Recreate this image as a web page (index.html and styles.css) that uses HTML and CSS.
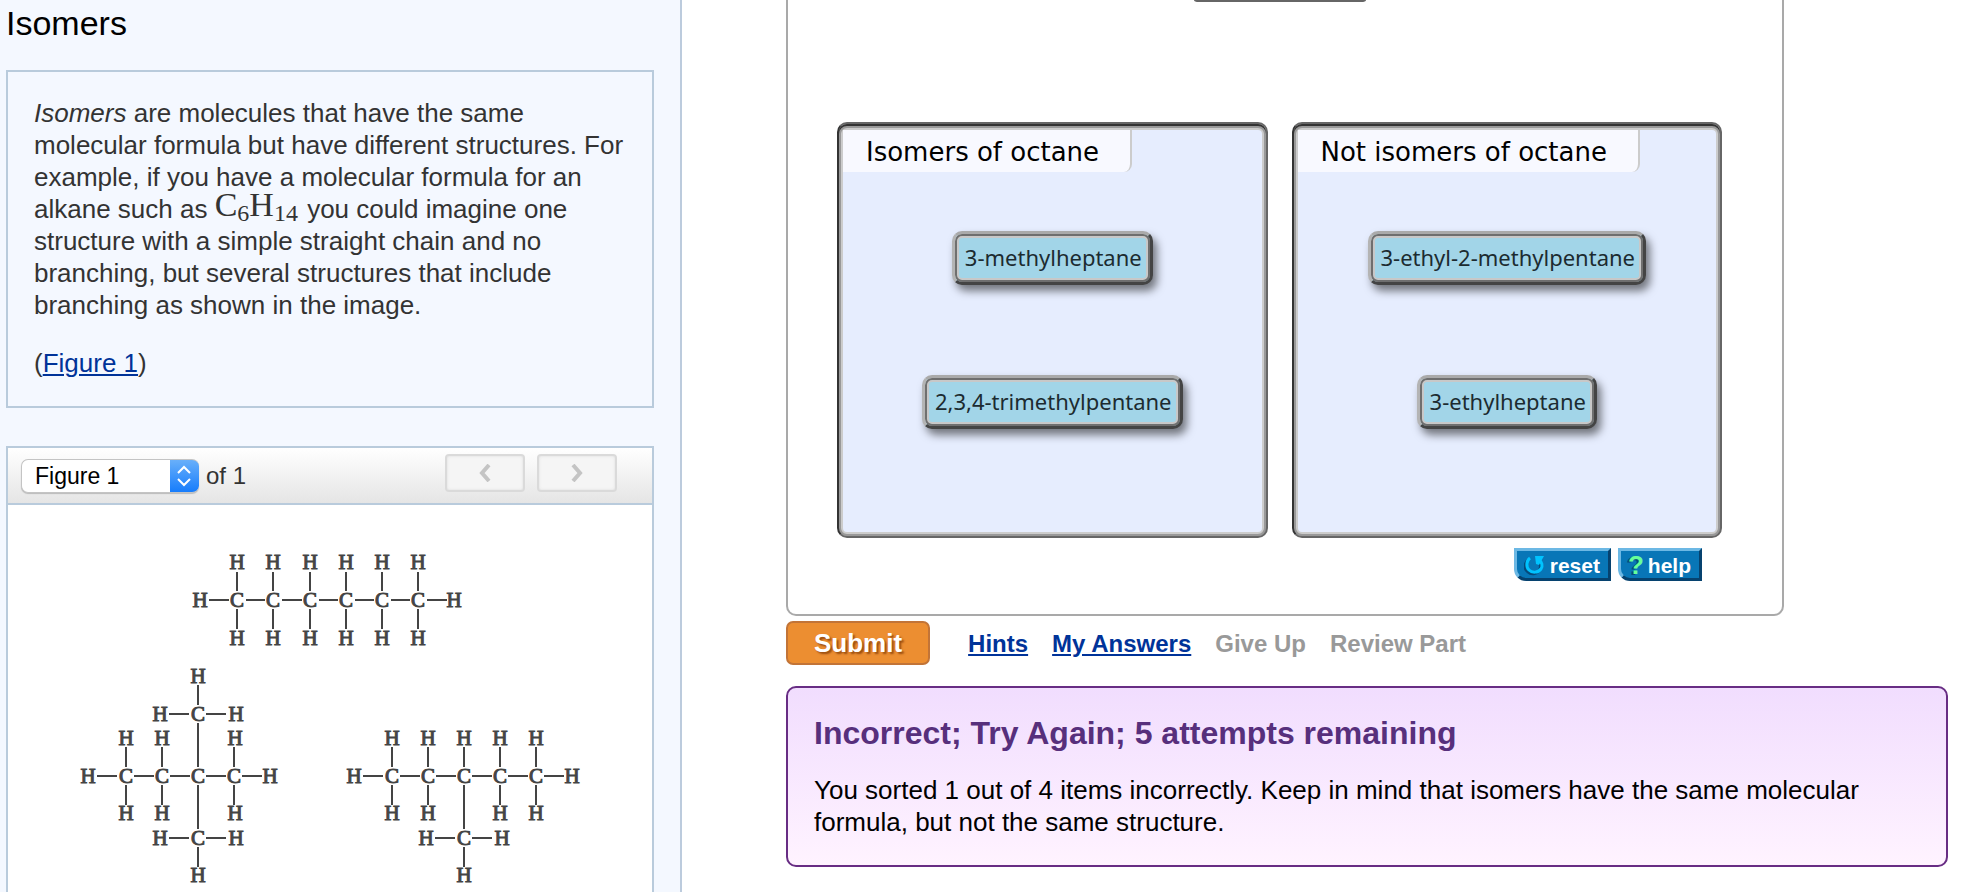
FILE: index.html
```html
<!DOCTYPE html>
<html lang="en">
<head>
    <meta charset="UTF-8">
    <meta name="viewport" content="width=device-width, initial-scale=1.0">
    <title>Isomers</title>
    <link rel="stylesheet" href="styles.css">
</head>
<body>
    <div class="page">
        <aside class="sidebar">
            <h1>Isomers</h1>
            <div class="intro">
                <p><em>Isomers</em> are molecules that have the same molecular formula but have different structures. For example, if you have a molecular formula for an alkane such as <span class="formula">C<sub>6</sub>H<sub>14</sub></span> you could imagine one structure with a simple straight chain and no branching, but several structures that include branching as shown in the image.</p>
                <p>(<a href="#figure">Figure 1</a>)</p>
            </div>
            <section class="figure" id="figure">
                <div class="figure-bar">
                    <div class="picker">
                        <select id="figureSelect" aria-label="Figure">
                            <option>Figure 1</option>
                        </select>
                        <svg class="picker-arrows" width="14" height="22" viewBox="0 0 14 22" fill="none" stroke="#fff" stroke-width="2">
                            <path d="M1 8 L7 2 L13 8 M1 14 L7 20 L13 14"/>
                        </svg>
                    </div>
                    <label for="figureSelect">of 1</label>
                    <div class="figure-nav">
                        <button type="button" aria-label="Previous figure" disabled>
                            <svg width="12" height="18" viewBox="0 0 12 18"><path d="M10 1 L3 9 L10 17"/></svg>
                        </button>
                        <button type="button" aria-label="Next figure" disabled>
                            <svg width="12" height="18" viewBox="0 0 12 18"><path d="M2 1 L9 9 L2 17"/></svg>
                        </button>
                    </div>
                </div>
                <svg class="molecules" viewBox="0 0 644 384" role="img" aria-label="Three isomers of hexane">
                    <!-- hexane -->
                    <g>
                        <text x="229 265 302 338 374 410" y="64">HHHHHH</text>
                        <text x="192 229 265 302 338 374 410 446" y="102">HCCCCCCH</text>
                        <text x="229 265 302 338 374 410" y="140">HHHHHH</text>
                        <path d="M201 95h20M238 95h19M274 95h20M311 95h19M347 95h19M383 95h19M419 95h20"/>
                        <path d="M229 67v19M265 67v19M302 67v19M338 67v19M374 67v19M410 67v19"/>
                        <path d="M229 104v20M265 104v20M302 104v20M338 104v20M374 104v20M410 104v20"/>
                    </g>
                    <!-- 2,2-dimethylbutane -->
                    <g>
                        <text x="190" y="178">H</text>
                        <text x="152 190 228" y="216">HCH</text>
                        <text x="118 154 227" y="240">HHH</text>
                        <text x="80 118 154 190 226 262" y="278">HCCCCH</text>
                        <text x="118 154 227" y="315">HHH</text>
                        <text x="152 190 228" y="340">HCH</text>
                        <text x="190" y="377">H</text>
                        <path d="M89 271h20M126 271h20M162 271h20M198 271h20M234 271h20"/>
                        <path d="M161 209h20M198 209h20M161 333h20M198 333h20"/>
                        <path d="M190 180v20M190 218v44M190 280v44M190 342v20"/>
                        <path d="M118 242v20M154 242v20M226 242v20M118 280v20M154 280v20M226 280v20"/>
                    </g>
                    <!-- 3-methylpentane -->
                    <g>
                        <text x="384 420 456 492 528" y="240">HHHHH</text>
                        <text x="346 384 420 456 492 528 564" y="278">HCCCCCH</text>
                        <text x="384 420 492 528" y="315">HHHH</text>
                        <text x="418 456 494" y="340">HCH</text>
                        <text x="456" y="377">H</text>
                        <path d="M355 271h20M392 271h20M428 271h20M464 271h20M500 271h20M536 271h20"/>
                        <path d="M427 333h20M464 333h20M456 280v44M456 342v20"/>
                        <path d="M384 242v20M420 242v20M456 242v20M492 242v20M528 242v20"/>
                        <path d="M384 280v20M420 280v20M492 280v20M528 280v20"/>
                    </g>
                </svg>
            </section>
        </aside>

        <main class="main">
            <div class="sorter">
                <div class="bank"></div>
                <div class="bins">
                    <section class="bin">
                        <h2>Isomers of octane</h2>
                        <div class="tiles">
                            <div class="tile">3-methylheptane</div>
                            <div class="tile">2,3,4-trimethylpentane</div>
                        </div>
                    </section>
                    <section class="bin">
                        <h2>Not isomers of octane</h2>
                        <div class="tiles">
                            <div class="tile">3-ethyl-2-methylpentane</div>
                            <div class="tile">3-ethylheptane</div>
                        </div>
                    </section>
                </div>
                <div class="tools">
                    <button type="button" class="tool">
                        <svg width="22" height="24" viewBox="0 0 22 24">
                            <path d="M4 6 C0 10 0 15 4 18 C7 21 13 20 15 17 C17 14 17 11 15 8" fill="none" stroke="#064a7c" stroke-width="3"/>
                            <path d="M6 4 C2 7 2 13 5 16 C8 19 14 19 17 15 C19 12 18 8 15 6" fill="none" stroke="#00c3ff" stroke-width="3"/>
                            <path d="M11 2 H20 L15 11 L12 10 Z" fill="#00c3ff"/>
                        </svg>
                        reset
                    </button>
                    <button type="button" class="tool">
                        <span class="question">?</span>
                        help
                    </button>
                </div>
            </div>

            <div class="actions">
                <button type="button" class="submit">Submit</button>
                <a href="#hints">Hints</a>
                <a href="#answers">My Answers</a>
                <span>Give Up</span>
                <span>Review Part</span>
            </div>

            <div class="feedback">
                <h2>Incorrect; Try Again; 5 attempts remaining</h2>
                <p>You sorted 1 out of 4 items incorrectly. Keep in mind that isomers have the same molecular formula, but not the same structure.</p>
            </div>
        </main>
    </div>
</body>
</html>
```
FILE: styles.css
```css
* {
    box-sizing: border-box;
}
body {
    margin: 0;
    font-family: "Liberation Sans", Arial, sans-serif;
    font-size: 26px;
    line-height: 32px;
    color: #000;
    background: #fff;
}
h1, h2, p {
    margin: 0;
}
button, select {
    font-family: inherit;
}
a {
    color: #003399;
}
.page {
    display: grid;
    grid-template-columns: 682px 1fr;
    min-height: 100vh;
}

/* left column */
.sidebar {
    display: flex;
    flex-direction: column;
    padding: 2px 26px 0 6px;
    border-right: 2px solid #bccbdd;
    background: #f4f8ff;
}
.sidebar h1 {
    margin-bottom: 26px;
    font-size: 34px;
    font-weight: normal;
    line-height: 42px;
}
.intro {
    padding: 25px 26px 27px;
    border: 2px solid #b9cbdc;
    color: #333;
}
.intro p + p {
    margin-top: 26px;
}
.formula {
    margin-right: 2px;
    font-family: "Liberation Serif", "Times New Roman", serif;
    font-size: 34px;
    line-height: 0;
    vertical-align: 2px;
}
.formula sub {
    font-size: 24px;
    line-height: 0;
    vertical-align: -5px;
}
.figure {
    flex: 1;
    margin-top: 38px;
    border: 2px solid #b9cbdc;
    border-bottom: 0;
    background: #fff;
}
.figure-bar {
    display: flex;
    align-items: center;
    height: 57px;
    padding: 0 35px 0 13px;
    border-bottom: 2px solid #b9cbdc;
    background: linear-gradient(#fff, #e5e5e5);
    color: #333;
    font-size: 24px;
}
.picker {
    position: relative;
    margin-right: 7px;
}
.picker select {
    display: block;
    width: 178px;
    height: 34px;
    padding: 0 13px;
    border: 1px solid #c4c4c4;
    border-right: 0;
    border-radius: 7px;
    appearance: none;
    background: linear-gradient(#6bb1fa, #147bfc) right / 29px 100% no-repeat #fff;
    background-origin: border-box;
    box-shadow: 0 1px 1px rgba(0, 0, 0, 0.2);
    color: #000;
    font-size: 23px;
}
.picker-arrows {
    position: absolute;
    top: 6px;
    right: 8px;
    pointer-events: none;
}
.figure-nav {
    display: flex;
    gap: 12px;
    margin-left: auto;
    padding-bottom: 6px;
}
.figure-nav button {
    display: flex;
    align-items: center;
    justify-content: center;
    width: 80px;
    height: 38px;
    border: 2px solid #dadada;
    border-radius: 4px;
    background: #f5f5f5;
    box-shadow: inset 0 0 3px #ddd;
}
.figure-nav svg {
    fill: none;
    stroke: #c4c4c4;
    stroke-width: 4;
}
.molecules {
    display: block;
    width: 100%;
    fill: #444;
    stroke: #444;
    font-family: "Liberation Serif", "Times New Roman", serif;
    font-size: 21px;
    text-anchor: middle;
}
.molecules text {
    stroke-width: 1px;
}
.molecules path {
    fill: none;
    stroke-width: 2px;
}

/* right column */
.main {
    padding: 0 28px 0 104px;
}
.sorter {
    max-width: 998px;
    padding: 0 60px 33px 49px;
    border: 2px solid #a9a9a9;
    border-top: 0;
    border-radius: 0 0 10px 10px;
}
.bank {
    width: 172px;
    height: 2px;
    margin: 0 auto 120px;
    border-radius: 0 0 5px 5px / 0 0 2px 2px;
    background: #666;
}
.bins {
    display: grid;
    grid-template-columns: 1fr 1fr;
    gap: 24px;
}
.bin {
    min-height: 416px;
    padding: 6px 4px 4px;
    border: 2px solid #666;
    border-left-color: #333;
    border-radius: 10px;
    background: #e6edfe;
    box-shadow:
        inset 0 2px 0 0 #333,
        inset 0 2px 0 2px #999,
        inset 0 0 0 2px #999,
        inset 0 2px 0 4px #ccc,
        inset 0 0 0 4px #ccc;
}
.bin h2 {
    width: fit-content;
    height: 42px;
    padding: 0 31px 0 23px;
    border-right: 2px solid #ccc;
    border-bottom-right-radius: 8px;
    background: #f8f9ff;
    font-family: "DejaVu Sans", Verdana, sans-serif;
    font-size: 26px;
    font-weight: normal;
    line-height: 44px;
}
.tiles {
    display: flex;
    flex-direction: column;
    align-items: center;
    gap: 90px;
    padding-top: 59px;
}
.tile {
    height: 54px;
    padding: 0 8px 0 10px;
    border: 3px solid;
    border-color: #aaa #444 #444 #b4b4b4;
    border-radius: 10px;
    background: #a2d5e8;
    box-shadow:
        inset 0 0 0 2px #6f6f6f,
        inset 0 0 0 4px #c8c8c8,
        4px 6px 8px rgba(0, 0, 0, 0.5);
    color: #1c2b30;
    font-family: "Noto Sans", Tahoma, sans-serif;
    font-size: 22px;
    line-height: 46px;
}
.tools {
    display: flex;
    justify-content: flex-end;
    gap: 7px;
    margin: 10px 20px 0 0;
}
.tool {
    display: flex;
    align-items: center;
    gap: 4px;
    height: 33px;
    padding: 2px 8px 0 7px;
    border: 3px solid;
    border-color: #6cb8e4 #06426f #06426f #6cb8e4;
    border-radius: 0 0 0 12px;
    background: #0876b7;
    color: #fff;
    font-size: 21px;
    font-weight: bold;
}
.question {
    color: #66ff99;
    font-size: 26px;
    text-shadow: -2px 1px #064a7c;
}
.actions {
    display: flex;
    align-items: baseline;
    gap: 24px;
    margin-top: 5px;
    color: #999;
    font-size: 24px;
    font-weight: bold;
}
.submit {
    height: 44px;
    margin-right: 14px;
    padding: 0 26px;
    border: 2px solid #c27437;
    border-radius: 7px;
    background: #ec8e31;
    color: #fff;
    font-size: 26px;
    font-weight: bold;
    text-shadow: 2px 2px 2px rgba(120, 50, 0, 0.7);
}
.feedback {
    margin-top: 21px;
    padding: 25px 26px 27px;
    border: 2px solid #682d84;
    border-radius: 10px;
    background: linear-gradient(#f1ddfe, #fff3ff);
}
.feedback h2 {
    margin-bottom: 21px;
    color: #572f7c;
    font-size: 32px;
    line-height: 40px;
}
```
